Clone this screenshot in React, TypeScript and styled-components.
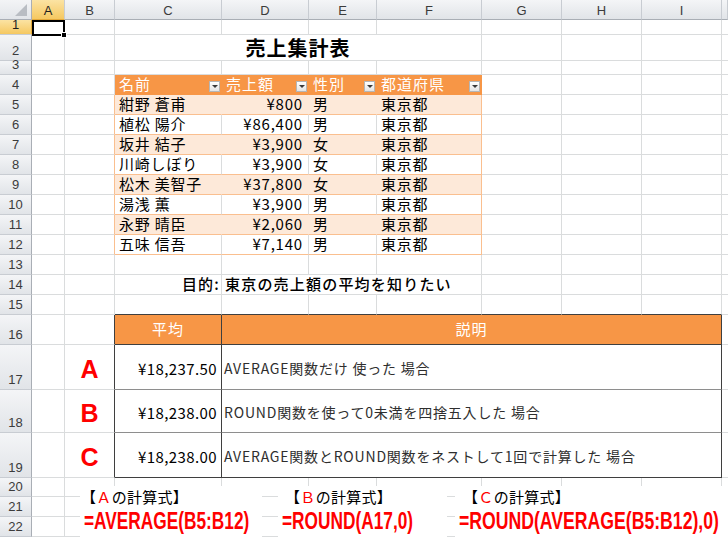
import React from 'react';
import styled, { createGlobalStyle } from 'styled-components';

const JP = `"Noto Sans CJK JP", "Noto Sans", sans-serif`;
const LATIN = `"Liberation Sans", Arial, sans-serif`;

const GRID = '#dadcdd';
const HEAD_LINE = '#c8ccd2';
const HEAD_EDGE = '#a9aeb5';
const ACTIVE_EDGE = '#e2a83a';
const ORANGE = '#f79646';
const BAND = '#fde9d9';
const BAND_LINE = '#fabf8f';
const DARK = '#3f3f3f';
const MID = '#8e8e8e';
const RED = '#ff0000';

const COLS = [32, 33, 50, 107, 87, 68, 105, 80, 80, 80, 6];
const ROWS = [20, 15, 26, 14, 20, ...Array(11).fill(20), 30, 45, 43, 45, 19, 20, 20];
const COL_LETTERS = ['A', 'B', 'C', 'D', 'E', 'F', 'G', 'H', 'I', ''];

const people = [
  ['紺野 蒼甫', '¥800', '男', '東京都'],
  ['植松 陽介', '¥86,400', '男', '東京都'],
  ['坂井 結子', '¥3,900', '女', '東京都'],
  ['川崎しぼり', '¥3,900', '女', '東京都'],
  ['松木 美智子', '¥37,800', '女', '東京都'],
  ['湯浅 薫', '¥3,900', '男', '東京都'],
  ['永野 晴臣', '¥2,060', '男', '東京都'],
  ['五味 信吾', '¥7,140', '男', '東京都'],
];

const results = [
  ['A', '¥18,237.50', 'AVERAGE関数だけ 使った 場合'],
  ['B', '¥18,238.00', 'ROUND関数を使って0未満を四捨五入した 場合'],
  ['C', '¥18,238.00', 'AVERAGE関数とROUND関数をネストして1回で計算した 場合'],
];

const notes = [
  { left: 80, width: 182, labelPad: 1, formulaPad: 4, scale: 0.72, mark: 'Ａ', formula: '=AVERAGE(B5:B12)' },
  { left: 278, width: 169, labelPad: 7, formulaPad: 4, scale: 0.72, mark: 'Ｂ', formula: '=ROUND(A17,0)' },
  { left: 455, width: 273, labelPad: 8, formulaPad: 4, scale: 0.735, mark: 'Ｃ', formula: '=ROUND(AVERAGE(B5:B12),0)' },
];

const GlobalStyle = createGlobalStyle`
  html, body { margin: 0; padding: 0; background: #fff; overflow: hidden; }
  #root { width: 728px; height: 537px; }
`;

const Sheet = styled.div`
  position: relative;
  display: grid;
  grid-template-columns: ${COLS.map((c) => c + 'px').join(' ')};
  grid-template-rows: ${ROWS.map((r) => r + 'px').join(' ')};
  width: 728px;
  height: 537px;
  overflow: hidden;
  background: #fff;
  font-family: ${JP};
`;

const Corner = styled.div`
  box-sizing: border-box;
  display: flex;
  justify-content: flex-end;
  align-items: flex-end;
  padding: 0 4px 3px 0;
  background: linear-gradient(#f3f4f6, #e2e5e9);
  border-right: 1px solid ${HEAD_EDGE};
  border-bottom: 1px solid ${HEAD_EDGE};
`;

const CornerMark = styled.span`
  width: 0;
  height: 0;
  border-left: 12px solid transparent;
  border-bottom: 12px solid #b9bdc3;
`;

const HeaderBase = styled.div<{ $active?: boolean }>`
  box-sizing: border-box;
  display: flex;
  justify-content: center;
  background: ${(p) => (p.$active ? 'linear-gradient(#fbe3a3, #f5c861)' : 'linear-gradient(#f4f5f7, #e1e4e8)')};
  color: ${(p) => (p.$active ? '#1f1f1f' : '#3b3b3b')};
  font-family: ${LATIN};
  font-size: 13px;
  line-height: 1;
`;

const ColHeader = styled(HeaderBase)`
  align-items: center;
  padding-top: 2px;
  border-right: 1px solid ${HEAD_LINE};
  border-bottom: 1px solid ${(p) => (p.$active ? ACTIVE_EDGE : HEAD_EDGE)};
`;

const RowHeader = styled(HeaderBase)`
  align-items: flex-end;
  padding-bottom: 3px;
  border-right: 1px solid ${(p) => (p.$active ? ACTIVE_EDGE : HEAD_EDGE)};
  border-bottom: 1px solid ${HEAD_LINE};
`;

type CellProps = {
  $span?: number;
  $fill?: string;
  $r?: string;
  $b?: string;
  $align?: 'left' | 'center' | 'right';
  $v?: 'top' | 'center' | 'bottom';
};

const Cell = styled.div<CellProps>`
  box-sizing: border-box;
  position: relative;
  min-width: 0;
  grid-column: span ${(p) => p.$span ?? 1};
  display: flex;
  justify-content: ${(p) => (p.$align === 'right' ? 'flex-end' : p.$align === 'center' ? 'center' : 'flex-start')};
  align-items: ${(p) => (p.$v === 'center' ? 'center' : p.$v === 'top' ? 'flex-start' : 'flex-end')};
  padding: 0 4px 2px;
  background: ${(p) => p.$fill ?? '#fff'};
  border-right: 1px solid ${(p) => p.$r ?? p.$fill ?? GRID};
  border-bottom: 1px solid ${(p) => p.$b ?? p.$fill ?? GRID};
  white-space: nowrap;
  font-size: 15px;
  line-height: 1;
  color: #000;
`;

const TitleCell = styled(Cell)`
  font-size: 20px;
  font-weight: 700;
  letter-spacing: 1px;
  padding-bottom: 0;
`;

const TableHead = styled(Cell)`
  color: #fff;
  letter-spacing: 1px;
  padding-bottom: 3px;
`;

const FilterButton = styled.span`
  position: absolute;
  right: 1px;
  bottom: 2px;
  width: 11px;
  height: 11px;
  box-sizing: border-box;
  border: 1px solid #b5b5b5;
  background: linear-gradient(#ffffff, #e4e4e4);
  display: flex;
  align-items: center;
  justify-content: center;
  &::after {
    content: '';
    border-left: 3px solid transparent;
    border-right: 3px solid transparent;
    border-top: 3px solid #3a3a3a;
  }
`;

const DataCell = styled(Cell)`
  letter-spacing: 0.8px;
  padding: 0 5px 3px 4px;
`;

const GoalCell = styled(Cell)`
  font-weight: 500;
  letter-spacing: 1.2px;
  padding: 0 1px 3px 3px;
`;

const SummaryHead = styled(Cell)`
  color: #fff;
  letter-spacing: 1px;
`;

const MarkCell = styled(Cell)`
  font-family: ${LATIN};
  font-size: 25px;
  font-weight: 700;
  color: ${RED};
  padding: 4px 0 0 0;
`;

const ValueCell = styled(Cell)`
  letter-spacing: 0.4px;
  padding: 2px 4px 0 0;
`;

const NoteCell = styled(Cell)`
  font-size: 14px;
  letter-spacing: 0.8px;
  color: #2e2e2e;
  padding: 2px 2px 0 2px;
`;

const Selection = styled.span`
  position: absolute;
  left: 0;
  top: 0;
  right: -1px;
  bottom: -2px;
  border: 2px solid #000;
  z-index: 2;
  &::after {
    content: '';
    position: absolute;
    right: -4px;
    bottom: -4px;
    width: 4px;
    height: 4px;
    background: #000;
    border: 1px solid #fff;
  }
`;

const NoteBox = styled.div<{ $left: number; $width: number }>`
  position: absolute;
  top: 486px;
  left: ${(p) => p.$left}px;
  width: ${(p) => p.$width}px;
  height: 51px;
  background: #fff;
  overflow: hidden;
  display: flex;
  flex-direction: column;
  z-index: 3;
`;

const NoteLabel = styled.div<{ $pad: number }>`
  height: 22px;
  line-height: 22px;
  padding-left: ${(p) => p.$pad}px;
  font-size: 15px;
  letter-spacing: 0.3px;
  color: #000;
  white-space: nowrap;
`;

const RedMark = styled.span`
  color: ${RED};
`;

const FormulaLine = styled.div<{ $pad: number }>`
  margin-top: 1px;
  padding-left: ${(p) => p.$pad}px;
  white-space: nowrap;
`;

const Formula = styled.span<{ $scale: number }>`
  display: inline-block;
  font-family: ${LATIN};
  font-size: 24px;
  font-weight: 700;
  line-height: 24px;
  color: ${RED};
  transform: scaleX(${(p) => p.$scale});
  transform-origin: 0 50%;
`;

const Blank = ({ n, b }: { n: number; b?: string }) => (
  <>
    {Array.from({ length: n }, (_, i) => (
      <Cell key={i} $b={b} />
    ))}
  </>
);

export default function App() {
  return (
    <>
      <GlobalStyle />
      <Sheet>
        <Corner>
          <CornerMark />
        </Corner>
        {COL_LETTERS.map((c, i) => (
          <ColHeader key={i} $active={c === 'A'}>
            {c}
          </ColHeader>
        ))}

        <RowHeader $active>1</RowHeader>
        <Cell>
          <Selection />
        </Cell>
        <Blank n={9} />

        <RowHeader>2</RowHeader>
        <Blank n={2} />
        <TitleCell $span={4} $align="center" $v="center">
          売上集計表
        </TitleCell>
        <Blank n={4} />

        <RowHeader>3</RowHeader>
        <Blank n={10} />

        <RowHeader>4</RowHeader>
        <Blank n={2} />
        {['名前', '売上額', '性別', '都道府県'].map((h) => (
          <TableHead key={h} $fill={ORANGE}>
            {h}
            <FilterButton />
          </TableHead>
        ))}
        <Blank n={4} />

        {people.map((p, i) => {
          const banded = i % 2 === 0;
          const fill = banded ? BAND : undefined;
          const inner = banded ? BAND : GRID;
          return (
            <React.Fragment key={i}>
              <RowHeader>{i + 5}</RowHeader>
              <Cell />
              <Cell $r={BAND_LINE} />
              <DataCell $fill={fill} $r={inner} $b={BAND_LINE}>
                {p[0]}
              </DataCell>
              <DataCell $fill={fill} $r={inner} $b={BAND_LINE} $align="right">
                {p[1]}
              </DataCell>
              <DataCell $fill={fill} $r={inner} $b={BAND_LINE}>
                {p[2]}
              </DataCell>
              <DataCell $fill={fill} $r={BAND_LINE} $b={BAND_LINE}>
                {p[3]}
              </DataCell>
              <Blank n={4} />
            </React.Fragment>
          );
        })}

        <RowHeader>13</RowHeader>
        <Blank n={10} />

        <RowHeader>14</RowHeader>
        <Blank n={2} />
        <GoalCell $align="right">目的:</GoalCell>
        <GoalCell $span={3}>東京の売上額の平均を知りたい</GoalCell>
        <Blank n={4} />

        <RowHeader>15</RowHeader>
        <Blank n={2} />
        <Blank n={7} b={DARK} />
        <Blank n={1} />

        <RowHeader>16</RowHeader>
        <Cell />
        <Cell $r={DARK} />
        <SummaryHead $fill={ORANGE} $r={DARK} $b={DARK} $align="center" $v="center">
          平均
        </SummaryHead>
        <SummaryHead $span={6} $fill={ORANGE} $r={DARK} $b={DARK} $align="center" $v="center">
          説明
        </SummaryHead>
        <Blank n={1} />

        {results.map((r, i) => {
          const edge = i === results.length - 1 ? DARK : MID;
          return (
            <React.Fragment key={r[0]}>
              <RowHeader>{i + 17}</RowHeader>
              <Cell />
              <MarkCell $r={DARK} $align="center" $v="center">
                {r[0]}
              </MarkCell>
              <ValueCell $r={DARK} $b={edge} $align="right" $v="center">
                {r[1]}
              </ValueCell>
              <NoteCell $span={6} $r={DARK} $b={edge} $v="center">
                {r[2]}
              </NoteCell>
              <Blank n={1} />
            </React.Fragment>
          );
        })}

        {[20, 21, 22].map((n) => (
          <React.Fragment key={n}>
            <RowHeader>{n}</RowHeader>
            <Blank n={10} />
          </React.Fragment>
        ))}

        {notes.map((n) => (
          <NoteBox key={n.mark} $left={n.left} $width={n.width}>
            <NoteLabel $pad={n.labelPad}>
              【<RedMark>{n.mark}</RedMark>の計算式】
            </NoteLabel>
            <FormulaLine $pad={n.formulaPad}>
              <Formula $scale={n.scale}>{n.formula}</Formula>
            </FormulaLine>
          </NoteBox>
        ))}
      </Sheet>
    </>
  );
}
